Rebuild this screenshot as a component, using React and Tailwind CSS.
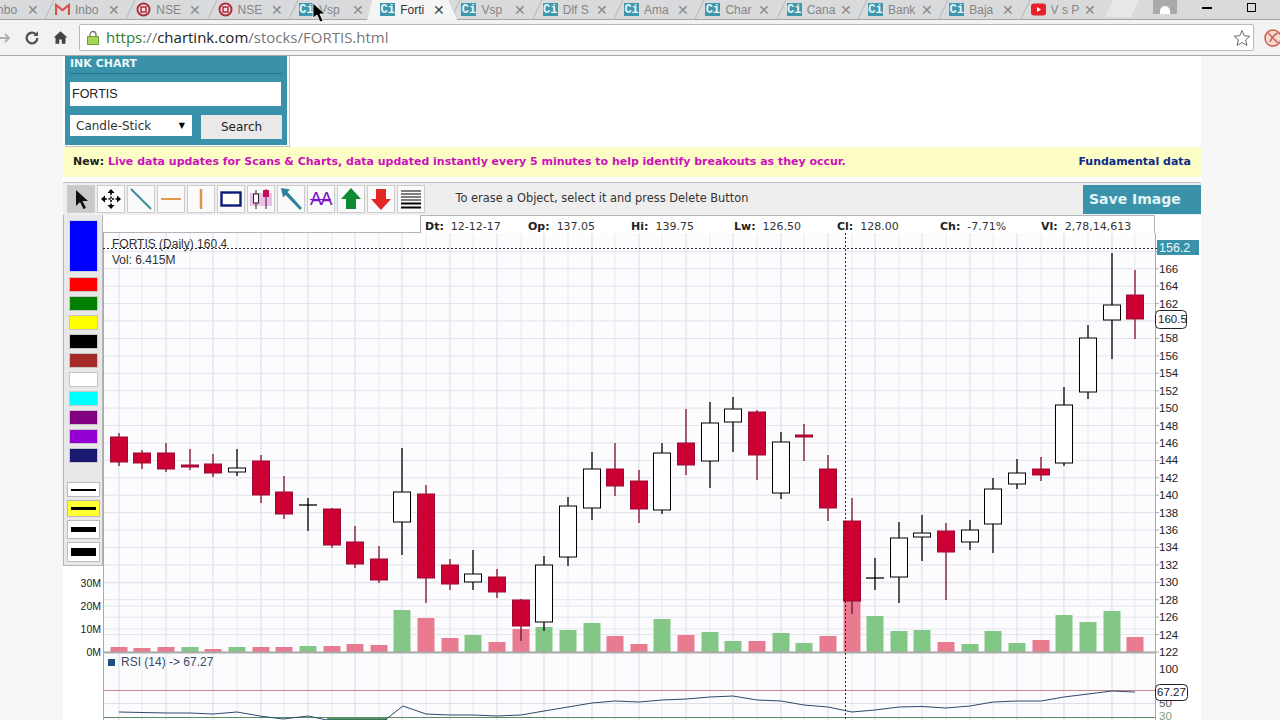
import React from "react";

// [cx, wickTop, wickBottom, bodyTop, bodyBottom, colour, volumeTop, volumeColour]
const C = [
  [119,433,466,437,462,"r",647,"r"],[142,450,469,453,463,"r",648,"r"],[166,443,472,453,469,"r",647,"r"],
  [190,449,470,465,467,"r",647,"g"],[213,454,477,464,473,"r",649,"r"],[237,449,476,468,472,"w",647,"g"],
  [261,455,503,461,495,"r",647,"r"],[284,476,519,492,514,"r",647,"r"],[308,498,531,505,505,"w",646,"g"],
  [332,508,548,509,545,"r",646,"r"],[355,526,568,542,564,"r",644,"r"],[379,546,583,559,580,"r",645,"r"],
  [402,448,555,492,522,"w",610,"g"],[426,485,603,494,578,"r",618,"r"],[450,559,590,565,584,"r",638,"r"],
  [473,550,590,574,582,"w",635,"g"],[497,569,598,577,592,"r",642,"r"],[521,599,641,600,626,"r",629,"r"],
  [544,556,631,565,622,"w",627,"g"],[568,497,566,506,557,"w",630,"g"],[592,452,520,469,508,"w",623,"g"],
  [615,443,496,469,486,"r",636,"r"],[639,470,523,481,509,"r",644,"r"],[662,443,514,453,510,"w",619,"g"],
  [686,409,475,443,465,"r",635,"r"],[710,402,488,423,461,"w",632,"g"],[733,397,452,409,422,"w",641,"g"],
  [757,410,480,412,455,"r",641,"r"],[781,432,499,442,493,"w",633,"g"],[804,424,461,435,437,"r",643,"g"],
  [828,455,521,469,508,"r",636,"r"],[852,498,614,521,601,"r",595,"r"],[875,558,590,578,578,"w",616,"g"],
  [899,522,603,538,577,"w",631,"g"],[922,515,561,533,537,"w",630,"g"],[946,523,600,531,552,"r",642,"r"],
  [970,520,550,530,542,"w",644,"g"],[993,478,553,489,524,"w",631,"g"],[1017,459,489,473,484,"w",643,"g"],
  [1041,457,481,469,475,"r",640,"r"],[1064,387,466,405,463,"w",615,"g"],[1088,325,399,338,392,"w",622,"g"],
  [1112,253,359,305,320,"w",611,"g"],[1135,270,339,295,319,"r",637,"r"],
];

const RSI = "119,712 167,713 190,713 213,714 237,712 260,716 283,719 308,716 327,720 385,720 403,706 426,714 450,715 473,715 497,716 521,715 544,711 568,707 592,703 615,701 639,702 662,700 686,699 710,697 733,696 757,700 781,701 804,705 828,707 852,712 875,710 899,707 922,706.5 946,708 970,706 993,702 1017,701 1041,701 1064,697 1088,694 1112,691 1135,692";

const prices = [];
for (let i = 0; i <= 23; i++) prices.push({ y: 652 - i * 17.42, v: 122 + i * 2 });

const TABS = [
  { k: "gm", t: "Inbo" },
  { k: "gm", t: "Inbo" }, { k: "ns", t: "NSE" }, { k: "ns", t: "NSE" },
  { k: "ci", t: "Vsp" }, { k: "ci", t: "Forti", active: true }, { k: "ci", t: "Vsp" },
  { k: "ci", t: "Dlf S" }, { k: "ci", t: "Ama" }, { k: "ci", t: "Char" }, { k: "ci", t: "Cana" },
  { k: "ci", t: "Bank" }, { k: "ci", t: "Baja" }, { k: "yt", t: "V s P" },
];

function Fav({ k }) {
  if (k === "ci")
    return <span className="flex h-[13px] w-[15px] shrink-0 items-center justify-center bg-[#3f97ae] font-['Liberation_Mono'] text-[12px] font-bold text-[#e8f6f8]">Ci</span>;
  if (k === "gm")
    return (
      <svg width="15" height="13" viewBox="0 0 15 13" className="shrink-0">
        <path d="M1 12V2l6.500 5L14 2v10" fill="none" stroke="#d9534a" strokeWidth="2.200" />
      </svg>
    );
  if (k === "ns")
    return (
      <svg width="15" height="15" viewBox="0 0 15 15" className="shrink-0">
        <circle cx="7.500" cy="7.500" r="6" fill="#f3dede" stroke="#a83040" strokeWidth="2" />
        <rect x="5" y="5" width="5" height="5" fill="none" stroke="#a83040" strokeWidth="1.500" />
      </svg>
    );
  return (
    <svg width="15" height="13" viewBox="0 0 15 13" className="shrink-0">
      <rect width="15" height="12" y="0.500" rx="3" fill="#e8212d" />
      <path d="M6 4l4 2.500L6 9z" fill="#fff" />
    </svg>
  );
}

function Tab({ tab }) {
  return (
    <div className={"relative flex w-[81.3px] shrink-0 items-center pl-[11px] " + (tab.active ? "z-10 h-[20px] pb-[1px]" : "h-[19px]")}>
      {tab.active ? (
        <span className="absolute left-[-2px] top-0 -z-10 h-[20px] w-[92px] bg-[#f5f5f5] [clip-path:polygon(5px_0,81px_0,90px_100%,0_100%)]" />
      ) : (
        <span className="absolute left-[5px] top-0 h-[19px] w-px -skew-x-[25deg] bg-[#b5b6b8]" />
      )}
      <Fav k={tab.k} />
      <span className={"ml-[5px] w-[29px] overflow-hidden whitespace-nowrap text-[12px] " + (tab.active ? "text-[#333]" : "text-[#858585]")}>{tab.t}</span>
      <span className={"ml-[4px] text-[14px] leading-none " + (tab.active ? "text-[#444]" : "text-[#888]")}>✕</span>
    </div>
  );
}

function Tool({ active, children }) {
  return (
    <div className={"flex h-[28px] w-[28px] shrink-0 items-center justify-center border border-[#cccccc] " + (active ? "bg-[#c9c9c9]" : "bg-[#fafafa]")}>
      {children}
    </div>
  );
}

const Sv = ({ children }) => <svg width="24" height="24" viewBox="0 0 24 24">{children}</svg>;

function Toolbar() {
  return (
    <div className="flex gap-[2px]">
      <Tool active><Sv><path d="M7 3l0 16 4-4 3.500 7 2.500-1-3.500-7H19z" fill="#111" /></Sv></Tool>
      <Tool><Sv>
        <path d="M12 2l3.500 4h-7zM12 22l-3.500-4h7zM2 12l4-3.500v7zM22 12l-4 3.500v-7z" fill="#000" />
        <path d="M12 6v12M6 12h12" stroke="#000" strokeWidth="1.600" strokeDasharray="2 1.500" />
      </Sv></Tool>
      <Tool><Sv><path d="M2 2l20 20" stroke="#3a8a9c" strokeWidth="2" /></Sv></Tool>
      <Tool><Sv><path d="M2 12h20" stroke="#e09a4d" strokeWidth="2" /></Sv></Tool>
      <Tool><Sv><path d="M12 2v20" stroke="#d9954a" strokeWidth="2.500" /></Sv></Tool>
      <Tool><Sv><rect x="2.500" y="5.500" width="19" height="13" fill="#fff" stroke="#0a1a78" strokeWidth="2.400" /></Sv></Tool>
      <Tool><Sv>
        <rect x="1" y="6" width="22" height="13" fill="#f0bde6" />
        <path d="M7 3v19M17 2v20" stroke="#222" strokeWidth="1" />
        <rect x="4.500" y="7" width="5" height="9" fill="#fff" stroke="#222" />
        <rect x="14" y="3" width="6" height="7" fill="#cc0a55" />
      </Sv></Tool>
      <Tool><Sv><path d="M2 1l9 1.500-2.500 2.500L23 21l-2 2L6.500 8 4 10.500z" fill="#2f8298" /></Sv></Tool>
      <Tool><span className="font-['Liberation_Sans'] text-[18px] leading-none tracking-[-1.500px] text-[#7a12c8] line-through">AA</span></Tool>
      <Tool><Sv><path d="M12 1L2 12h5v10h10V12h5z" fill="#0c8a34" /></Sv></Tool>
      <Tool><Sv><path d="M12 23L2 12h5V2h10v10h5z" fill="#e32626" /></Sv></Tool>
      <Tool><Sv>
        <path d="M2 4h20M2 7h20M2 10h20M2 13h20" stroke="#000" strokeWidth="1" />
        <path d="M2 16.500h20M2 20.500h20" stroke="#000" strokeWidth="2" />
      </Sv></Tool>
    </div>
  );
}

const SWATCHES = ["bg-[#ff0000]", "bg-[#008000]", "bg-[#ffff00]", "bg-[#000000]", "bg-[#a52a2a]", "bg-[#ffffff]", "bg-[#00ffff]", "bg-[#800080]", "bg-[#9400d3]", "bg-[#191970]"];

function Sidebar() {
  return (
    <div className="flex w-[40px] shrink-0 flex-col">
      <div className="flex h-[351px] flex-col items-center border-x border-b border-[#b5b5b5] bg-[#e8e8e8] pt-[5px]">
        <div className="h-[52px] w-[29px] border border-[#c9d4e8] bg-[#0000ff]" />
        <div className="mt-[5px] flex flex-col gap-[4px]">
          {SWATCHES.map((c) => (
            <div key={c} className={"h-[15px] w-[29px] border border-[#c6c6c6] " + c} />
          ))}
        </div>
        <div className="mt-[19px] flex flex-col gap-[3px]">
          <Line h="h-[2px]" box="h-[15px] bg-white" />
          <Line h="h-[3px]" box="h-[17px] bg-[#ffff33]" />
          <Line h="h-[5px]" box="h-[19px] bg-white" />
          <Line h="h-[8px]" box="h-[20px] bg-white" />
        </div>
      </div>
      <div className="flex flex-1 flex-col items-end bg-white pr-[2px] pt-[10px] font-['Liberation_Sans'] text-[10.500px] leading-[14px] text-[#222]">
        {["30M", "20M", "10M", "0M"].map((m) => (
          <span key={m} className="mb-[9px]">{m}</span>
        ))}
      </div>
    </div>
  );
}

function Line({ h, box }) {
  return (
    <div className={"flex w-[33px] items-center justify-center border border-[#bbbbbb] " + box}>
      <div className={"w-[25px] bg-black " + h} />
    </div>
  );
}

function InfoBar() {
  const items = [["Dt:", "12-12-17"], ["Op:", "137.05"], ["Hi:", "139.75"], ["Lw:", "126.50"], ["Cl:", "128.00"], ["Ch:", "-7.71%"], ["Vl:", "2,78,14,613"]];
  return (
    <div className="flex h-[18px] shrink-0">
      <div className="w-[318px] border-b border-r border-[#b5b5b5] bg-white" />
      <div className="grid w-[734px] grid-cols-[103px_103px_103px_103px_103px_101px_118px] items-start border-r border-t border-[#b5b5b5] bg-white pl-[4px] pt-[5px] font-['DejaVu_Sans'] text-[11px] leading-none text-[#333]">
        {items.map(([a, b]) => (
          <div key={a} className="whitespace-nowrap">
            <b className="text-[#222]">{a}</b>&nbsp; {b}
          </div>
        ))}
      </div>
      <div className="flex-1 bg-white" />
    </div>
  );
}

function Chart() {
  const red = "#cc0033";
  const xs = C.map((c) => c[0]);
  return (
    <svg width="1098" height="487" viewBox="103 233 1098 487" className="block">
      <rect x="103" y="233" width="1052" height="487" fill="#fcfcfe" />
      {xs.map((x, i) => (
        <line key={x} x1={x} x2={x} y1="233" y2="720" stroke={i % 2 ? "#e8eaef" : "#dadde4"} strokeWidth="1" />
      ))}
      {prices.map((p) => (
        <line key={p.v} x1="103" x2="1155" y1={p.y} y2={p.y} stroke="#e0e3e9" strokeWidth="1" />
      ))}
      {[583, 606, 629].map((y) => (
        <line key={y} x1="103" x2="1155" y1={y} y2={y} stroke="#e4e6eb" strokeWidth="1" />
      ))}
      {C.map((c) => (
        <rect key={c[0]} x={c[0] - 8.500} y={c[6]} width="17" height={652 - c[6]} fill={c[7] === "r" ? "#e87b90" : "#82c785"} />
      ))}
      <line x1="103" x2="1155" y1="652.500" y2="652.500" stroke="#aaaaaa" strokeWidth="2" />
      {C.map((c) => {
        const isRed = c[5] === "r";
        const col = isRed ? "#7e0a2c" : "#000";
        const flat = c[4] - c[3] < 1;
        return (
          <g key={c[0]}>
            <line x1={c[0]} x2={c[0]} y1={c[1]} y2={c[2]} stroke={col} strokeWidth="1.300" />
            {flat ? (
              <line x1={c[0] - 9} x2={c[0] + 9} y1={c[3]} y2={c[3]} stroke={col} strokeWidth="1.300" />
            ) : (
              <rect x={c[0] - 8.500} y={c[3]} width="17" height={c[4] - c[3]} fill={isRed ? red : "#fff"} stroke={isRed ? "#9c0a34" : "#000"} strokeWidth="1" />
            )}
          </g>
        );
      })}
      <line x1="103" x2="1155" y1="690.500" y2="690.500" stroke="#c98a8a" strokeWidth="1" />
      <line x1="103" x2="1155" y1="703.500" y2="703.500" stroke="#dcdfe5" strokeWidth="1" />
      <rect x="327" y="717" width="60" height="3" fill="#4f9a5e" />
      <line x1="103" x2="1155" y1="717.500" y2="717.500" stroke="#5a8a62" strokeWidth="1" />
      <polyline points={RSI} fill="none" stroke="#2d4a6a" strokeWidth="1" />

      <line x1="103.500" x2="103.500" y1="233" y2="720" stroke="#aaaaaa" strokeWidth="1" />
      <line x1="1155.500" x2="1155.500" y1="233" y2="720" stroke="#aaaaaa" strokeWidth="1" />
      {prices.map((p) => (
        <line key={p.v} x1="1155" x2="1159" y1={p.y} y2={p.y} stroke="#aaaaaa" strokeWidth="1" />
      ))}

      <g fontFamily="Liberation Sans" fontSize="11.500" fill="#222">
        {prices.slice(0, 23).filter((p) => p.v !== 160).map((p) => (
          <text key={p.v} x="1159" y={p.y + 4}>{p.v}</text>
        ))}
        <text x="1159" y="673">100</text>
        <text x="1159" y="707" fill="#555">50</text>
        <text x="1159" y="720" fill="#7a9a7a">30</text>
      </g>

      <line x1="103" x2="1157" y1="248.500" y2="248.500" stroke="#222" strokeWidth="1" strokeDasharray="2 2" />
      <line x1="845.500" x2="845.500" y1="233" y2="720" stroke="#222" strokeWidth="1" strokeDasharray="2 2" />

      <g fontFamily="Liberation Sans" fontSize="12" fill="#333">
        <text x="112" y="248">FORTIS (Daily) 160.4</text>
        <text x="112" y="264">Vol: 6.415M</text>
      </g>
      <rect x="108" y="659" width="7" height="7" fill="#1f4e80" />
      <text x="121" y="666" fontFamily="Liberation Sans" fontSize="12" fill="#3a4a60">RSI (14) -&gt; 67.27</text>

      <rect x="1157" y="240" width="42" height="15" fill="#3a92aa" />
      <text x="1159" y="252" fontFamily="Liberation Sans" fontSize="12.500" fill="#e8f6f8">156.2</text>
      <rect x="1155.500" y="310.500" width="31" height="18" rx="4" fill="#fff" stroke="#222" />
      <text x="1158" y="323" fontFamily="Liberation Sans" fontSize="11.500" fill="#222">160.5</text>
      <rect x="1155.500" y="684.500" width="32" height="16" rx="4" fill="#fff" stroke="#222" />
      <text x="1157" y="696" fontFamily="Liberation Sans" fontSize="11.500" fill="#222">67.27</text>
    </svg>
  );
}

export default function App() {
  return (
    <div className="relative flex h-[720px] w-[1280px] flex-col overflow-hidden bg-[#f7f7f7] font-['Liberation_Sans']">
      {/* tab strip */}
      <div className="flex h-[20px] shrink-0 items-start border-b border-[#a4a4a4] bg-[#d9dadc]">
        <div className="ml-[-37.3px] flex shrink-0">
          {TABS.map((t, i) => <Tab key={i} tab={t} />)}
        </div>
        <div className="ml-[8px] h-[17px] w-[26px] shrink-0 -skew-x-[25deg] bg-[#e6e7e9]" />
        <div className="ml-[18px] flex h-[14px] w-[24px] shrink-0 items-end justify-center bg-[#a9a9a9]">
          <div className="h-[8px] w-[10px] rounded-t-full bg-white" />
        </div>
        <div className="ml-[25px] mt-[7px] h-[2px] w-[10px] shrink-0 bg-black" />
        <div className="ml-[35px] mt-[3px] h-[9px] w-[9px] shrink-0 border border-black bg-transparent" />
      </div>
      {/* address toolbar */}
      <div className="flex h-[36px] shrink-0 items-center border-b border-[#a8a8a8] bg-[#f2f2f2]">
        <svg width="14" height="14" viewBox="0 0 14 14" className="ml-[-3px] shrink-0">
          <path d="M1 7h11M8 3l4 4-4 4" fill="none" stroke="#b0b0b0" strokeWidth="2" />
        </svg>
        <svg width="16" height="16" viewBox="0 0 24 24" className="ml-[13px] shrink-0">
          <path d="M20 12a8 8 0 1 1-2.500-5.800" fill="none" stroke="#555" strokeWidth="3.500" />
          <path d="M21 2v7h-7z" fill="#555" />
        </svg>
        <svg width="15" height="15" viewBox="0 0 24 24" className="ml-[13px] shrink-0">
          <path d="M12 2L1 12h3v10h6v-7h4v7h6V12h3z" fill="#444" />
        </svg>
        <div className="ml-[11px] flex h-[27px] w-[1175px] shrink-0 items-center rounded-[2px] border border-[#b8b8b8] bg-white pl-[7px]">
          <svg width="12" height="15" viewBox="0 0 12 15" className="shrink-0">
            <path d="M3 7V4.500a3 3 0 0 1 6 0V7" fill="none" stroke="#777" strokeWidth="1.300" />
            <rect x="0.500" y="6.500" width="11" height="8" fill="#a5d65a" stroke="#6f9a3a" />
          </svg>
          <span className="ml-[7px] font-['Open_Sans'] text-[15px] text-[#777]">
            <span className="text-[#2e7d32]">https</span><span>://</span><span className="text-[#222]">chartink.com</span>/stocks/FORTIS.html
          </span>
          <svg width="18" height="18" viewBox="0 0 24 24" className="ml-auto mr-[2px] shrink-0">
            <path d="M12 2l3 7 7.500.6-5.700 4.900 1.800 7.300L12 18l-6.600 3.800 1.800-7.300L1.500 9.600 9 9z" fill="#fff" stroke="#666" strokeWidth="1.300" />
          </svg>
        </div>
        <svg width="20" height="20" viewBox="0 0 20 20" className="ml-[9px] shrink-0">
          <circle cx="10" cy="10" r="8" fill="#f5d9d4" stroke="#d0604e" strokeWidth="1.500" />
          <path d="M5 5l10 10M15 5c-3 1-6 4-8 9" fill="none" stroke="#d0604e" strokeWidth="1.500" />
        </svg>
      </div>

      {/* page */}
      <div className="ml-[63px] flex w-[1138px] flex-1 flex-col bg-white">
        <div className="flex h-[91px] shrink-0">
          <div className="ml-[2px] h-[91px] w-[225px] border-b border-r border-[#b9c7cc] bg-white pb-[1px] pr-[2px]">
            <div className="flex h-full flex-col bg-[#3a92aa] px-[5px]">
              <div className="h-[18px] border-b border-[#25708a] font-['DejaVu_Sans'] text-[11px] font-bold leading-[15px] text-[#eaf6f8]">INK CHART</div>
              <div className="mt-[8px] flex h-[24px] w-[211px] items-center bg-white pl-[2px] pt-[1px] text-[12.500px] text-[#222]">FORTIS</div>
              <div className="mt-[9px] flex items-start">
                <div className="flex h-[21px] w-[122px] items-center justify-between bg-white pl-[6px] pr-[7px] font-['DejaVu_Sans'] text-[12px] text-[#333]">
                  <span>Candle-Stick</span><span className="text-[8px] text-black">▼</span>
                </div>
                <div className="ml-[9px] flex h-[24px] w-[81px] items-center justify-center bg-[#e9e9e9] font-['DejaVu_Sans'] text-[12px] text-[#222]">Search</div>
              </div>
            </div>
          </div>
        </div>
        <div className="flex h-[30px] shrink-0 items-center justify-between bg-[#fdfdc6] pl-[10px] pr-[10px] font-['DejaVu_Sans'] text-[10.970px] font-bold leading-none">
          <div>
            <span className="text-[#222]">New: </span>
            <span className="text-[#cc11bb]">Live data updates for Scans &amp; Charts, data updated instantly every 5 minutes to help identify breakouts as they occur.</span>
          </div>
          <span className="text-[#0b2a8a]">Fundamental data</span>
        </div>
        <div className="mt-[5px] flex h-[33px] shrink-0 items-center border-t border-[#b9b9b9] bg-[#eeeeee] pl-[3.500px]">
          <Toolbar />
          <span className="mb-[1px] ml-[31px] font-['DejaVu_Sans'] text-[11.400px] text-[#333]">To erase a Object, select it and press Delete Button</span>
          <div className="ml-auto flex h-[29px] w-[118px] items-center bg-[#3a92aa] pl-[6px] font-['DejaVu_Sans'] text-[14px] font-bold text-[#e0f5f5]">Save Image</div>
        </div>
        <div className="flex min-h-0 flex-1">
          <Sidebar />
          <div className="flex flex-1 flex-col">
            <InfoBar />
            <Chart />
          </div>
        </div>
      </div>

      {/* mouse cursor */}
      <svg width="14" height="21" viewBox="0 0 14 21" className="absolute left-[312px] top-[2px]">
        <path d="M1 1v15l4-3 3 7 3-1-3-7h5z" fill="#000" stroke="#fff" strokeWidth="0.800" />
      </svg>
    </div>
  );
}
